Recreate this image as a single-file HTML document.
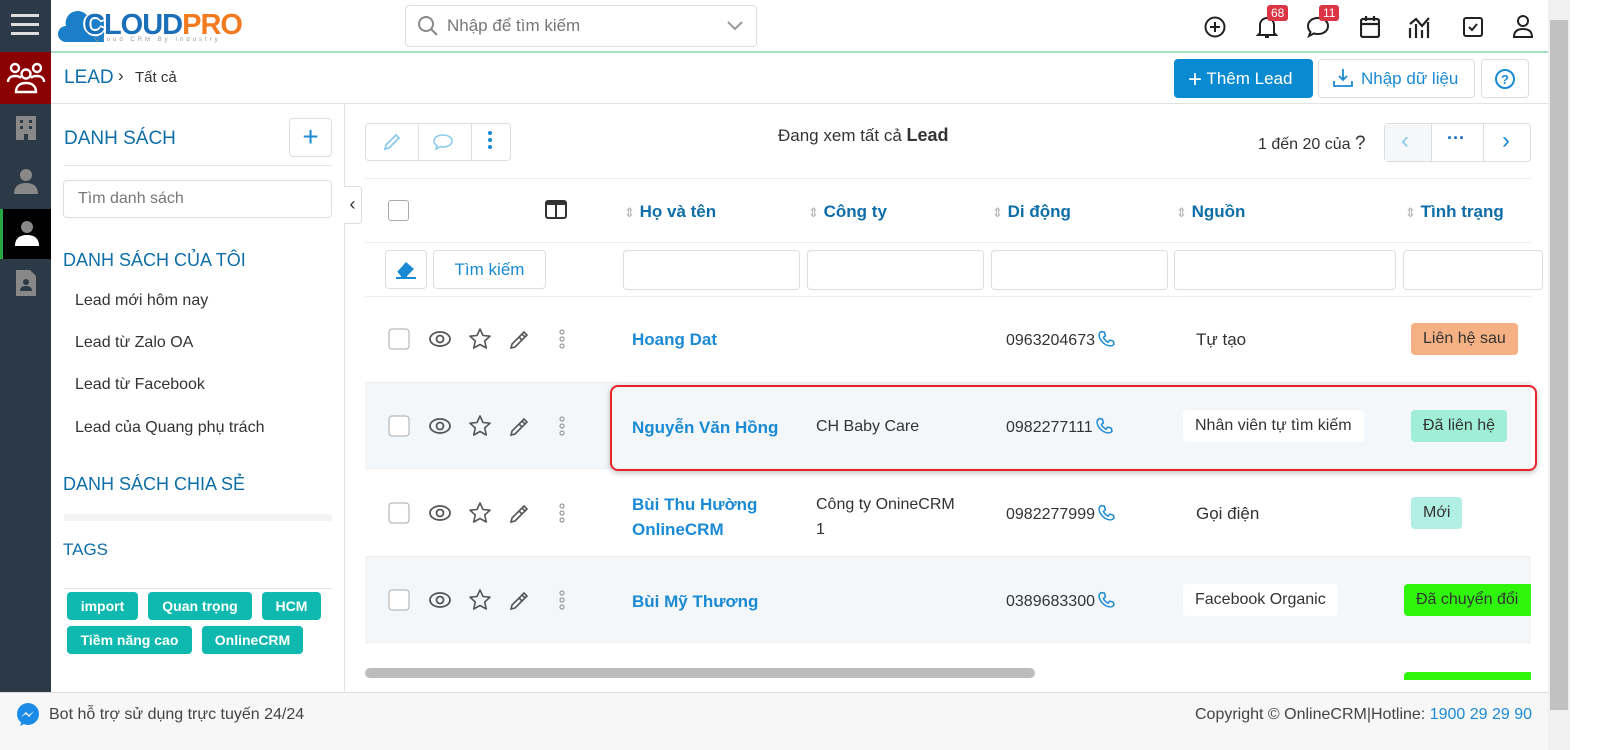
<!DOCTYPE html>
<html><head><meta charset="utf-8">
<style>
*{box-sizing:border-box;margin:0;padding:0}
body{width:1600px;height:750px;overflow:hidden;background:#fff;font-family:"Liberation Sans","DejaVu Sans",sans-serif;font-size:16px;color:#333;position:relative}
.a{position:absolute}
.side{left:0;top:0;width:51px;height:692px;background:#2c3a47}
.blue{color:#0e6ea8}
.lnk{color:#1a8ad4}
.chk{width:21px;height:21px;border:1px solid #aaa;border-radius:3px;background:#fff}
.btn{border:1px solid #ddd;border-radius:4px;background:#fff}
.tag{background:#10b9b0;color:#fff;font-weight:bold;font-size:14px;border-radius:4px;height:28px;line-height:28px;text-align:center}
.inp{border:1px solid #ddd;border-radius:4px;background:#fff;height:40px}
.badge{background:#dc3545;color:#fff;font-size:12px;border-radius:3px;padding:0 4px;height:16px;line-height:16px}
.pill{border-radius:4px;height:32px;line-height:32px;padding:0 12px;font-size:16px}
svg{display:block}
.ph{display:inline-block;vertical-align:-2px;margin-left:3px}
</style></head><body>
<div class="a side"></div>
<div class="a" style="left:11px;top:14px;width:28px;height:3px;background:#ddd;box-shadow:0 9px 0 #ddd,0 18px 0 #ddd"></div>
<div class="a" style="left:0;top:52px;width:51px;height:52px;background:#8b0000"></div>
<svg class="a" style="left:6px;top:60px" width="40" height="34" viewBox="0 0 40 34" fill="none" stroke="#fff" stroke-width="2.4"><circle cx="9" cy="8" r="4"/><circle cx="31" cy="8" r="4"/><circle cx="20" cy="14" r="4.5"/><path d="M2 22c0-4 3-6 7-6s5 1 6 2M38 22c0-4-3-6-7-6s-5 1-6 2M10 32c0-6 4-9 10-9s10 3 10 9z"/></svg>
<svg class="a" style="left:16px;top:116px" width="20" height="24" viewBox="0 0 20 24"><rect x="0" y="0" width="20" height="24" fill="#888"/><g fill="#2c3a47"><rect x="4" y="4" width="3" height="3"/><rect x="13" y="4" width="3" height="3"/><rect x="4" y="10" width="3" height="3"/><rect x="13" y="10" width="3" height="3"/><rect x="8" y="18" width="4" height="6"/></g></svg>
<svg class="a" style="left:14px;top:168px" width="24" height="26" viewBox="0 0 24 26" fill="#888"><circle cx="12" cy="7" r="6"/><path d="M0 26c0-8 5-11 12-11s12 3 12 11z"/></svg>
<div class="a" style="left:0;top:209px;width:51px;height:50px;background:#000"></div>
<div class="a" style="left:0;top:209px;width:3px;height:50px;background:#28a745"></div>
<svg class="a" style="left:15px;top:220px" width="24" height="26" viewBox="0 0 24 26"><circle cx="12" cy="7" r="6" fill="#888"/><path d="M0 26c0-8 5-11 12-11s12 3 12 11z" fill="#fff"/></svg>
<svg class="a" style="left:16px;top:270px" width="20" height="26" viewBox="0 0 20 26"><path d="M0 0h14l6 6v20H0z" fill="#888"/><circle cx="10" cy="12" r="3" fill="#2c3a47"/><path d="M4 21c0-4 3-5 6-5s6 1 6 5z" fill="#2c3a47"/></svg>

<div class="a" style="left:51px;top:51px;width:1497px;height:2px;background:#a8e0c4"></div>
<svg class="a" style="left:57px;top:4px" width="48" height="40" viewBox="0 0 48 40"><path d="M9 38a8 8 0 010-16 12 12 0 0122-9 10 10 0 0116 11v14z" fill="#1a7fc8"/></svg>
<div class="a" style="left:84px;top:9px;font-size:29px;font-weight:bold;letter-spacing:-1px;text-shadow:-2px 0 0 #fff,0 -2px 0 #fff,2px 0 0 #fff,0 2px 0 #fff"><span style="color:#1a6fb8">CLOUD</span><span style="color:#f47a20">PRO</span></div>
<div class="a" style="left:95px;top:37px;font-size:6px;letter-spacing:3px;color:#999">Cloud CRM By Industry</div>
<div class="a inp" style="left:405px;top:5px;width:352px;height:42px"></div>
<svg class="a" style="left:417px;top:15px" width="22" height="22" viewBox="0 0 22 22" fill="none" stroke="#888" stroke-width="2"><circle cx="9" cy="9" r="7"/><path d="M14 14l6 6"/></svg>
<div class="a" style="left:447px;top:16px;color:#777;font-size:17px">Nhập để tìm kiếm</div>
<svg class="a" style="left:726px;top:20px" width="18" height="12" viewBox="0 0 18 12" fill="none" stroke="#999" stroke-width="2"><path d="M2 2l7 7 7-7"/></svg>
<svg class="a" style="left:1204px;top:16px" width="22" height="22" viewBox="0 0 22 22" fill="none" stroke="#222" stroke-width="2"><circle cx="11" cy="11" r="9.5"/><path d="M11 6v10M6 11h10"/></svg>
<svg class="a" style="left:1256px;top:15px" width="22" height="24" viewBox="0 0 22 24" fill="none" stroke="#222" stroke-width="2"><path d="M4 18V10a7 7 0 0114 0v8l2 2H2zM9 22h4"/></svg>
<div class="a badge" style="left:1267px;top:5px">68</div>
<svg class="a" style="left:1306px;top:16px" width="24" height="22" viewBox="0 0 24 22" fill="none" stroke="#222" stroke-width="2"><path d="M12 2c6 0 10 3.5 10 8s-4 8-10 8c-1.5 0-3-.2-4-.6L3 20l1.5-4C3 14.5 2 12.5 2 10c0-4.5 4-8 10-8z"/></svg>
<div class="a badge" style="left:1319px;top:5px">11</div>
<svg class="a" style="left:1360px;top:15px" width="20" height="23" viewBox="0 0 20 23" fill="none" stroke="#222" stroke-width="2.2"><rect x="1" y="4" width="18" height="18" rx="2"/><path d="M1 9h18M6 1v5M14 1v5" /></svg>
<svg class="a" style="left:1408px;top:16px" width="24" height="22" viewBox="0 0 24 22" fill="none" stroke="#222" stroke-width="2.2"><path d="M2 22V12M8 22V8M14 22v-8M20 22V6M2 8l6-5 6 7 7-8"/></svg>
<svg class="a" style="left:1463px;top:17px" width="20" height="20" viewBox="0 0 20 20" fill="none" stroke="#222" stroke-width="2"><rect x="1" y="1" width="18" height="18" rx="2"/><path d="M6 10l3 3 5-6"/></svg>
<svg class="a" style="left:1513px;top:15px" width="20" height="23" viewBox="0 0 20 23" fill="none" stroke="#222" stroke-width="2"><circle cx="10" cy="6" r="5"/><path d="M1 22c0-6 4-8 9-8s9 2 9 8z"/></svg>
<div class="a" style="left:1548px;top:0;width:22px;height:750px;background:#f0f0f0"></div>
<div class="a" style="left:1550px;top:20px;width:18px;height:690px;background:#c1c1c1"></div>
<div class="a" style="left:1570px;top:0;width:30px;height:750px;background:#fff"></div>

<div class="a blue" style="left:64px;top:67px;font-size:19px">LEAD</div>
<div class="a" style="left:118px;top:66px;font-size:17px">›</div>
<div class="a" style="left:135px;top:69px;font-size:15px">Tất cả</div>
<div class="a" style="left:1174px;top:59px;width:139px;height:39px;background:#0a8bd1;border-radius:4px;color:#fff;font-size:17px;line-height:39px;padding-left:14px"><span style="font-size:24px;vertical-align:-3px">+</span> Thêm Lead</div>
<div class="a btn" style="left:1318px;top:59px;width:157px;height:39px;color:#1a8ad4;font-size:17px;line-height:37px;padding-left:42px">Nhập dữ liệu</div>
<svg class="a" style="left:1333px;top:68px" width="20" height="20" viewBox="0 0 20 20" fill="none" stroke="#1a8ad4" stroke-width="1.8"><path d="M10 1v11M6 8l4 4 4-4M1 13v5h18v-5"/></svg>
<div class="a btn" style="left:1481px;top:59px;width:48px;height:39px"></div>
<svg class="a" style="left:1494px;top:68px" width="22" height="22" viewBox="0 0 22 22" fill="none" stroke="#1a8ad4" stroke-width="2"><circle cx="11" cy="11" r="9"/><text x="11" y="16" font-size="13" text-anchor="middle" fill="#1a8ad4" stroke="none" font-weight="bold" font-family="Liberation Sans">?</text></svg>
<div class="a" style="left:51px;top:103px;width:1497px;height:1px;background:#e3e3e3"></div>

<div class="a" style="left:344px;top:104px;width:1px;height:588px;background:#e3e3e3"></div>
<div class="a blue" style="left:64px;top:128px;font-size:19px">DANH SÁCH</div>
<div class="a btn" style="left:289px;top:118px;width:43px;height:39px;color:#1a8ad4;font-size:28px;text-align:center;line-height:36px">+</div>
<div class="a" style="left:64px;top:165px;width:268px;height:1px;background:#e5e5e5"></div>
<div class="a inp" style="left:63px;top:180px;width:269px;height:38px;color:#777;font-size:16px;line-height:36px;padding-left:14px">Tìm danh sách</div>
<div class="a blue" style="left:63px;top:250px;font-size:18px">DANH SÁCH CỦA TÔI</div>
<div class="a" style="left:75px;top:292px;font-size:16px">Lead mới hôm nay</div>
<div class="a" style="left:75px;top:334px;font-size:16px">Lead từ Zalo OA</div>
<div class="a" style="left:75px;top:376px;font-size:16px">Lead từ Facebook</div>
<div class="a" style="left:75px;top:419px;font-size:16px">Lead của Quang phụ trách</div>
<div class="a blue" style="left:63px;top:474px;font-size:18px">DANH SÁCH CHIA SẺ</div>
<div class="a" style="left:64px;top:514px;width:268px;height:7px;background:#f3f3f3"></div>
<div class="a blue" style="left:63px;top:540px;font-size:17px">TAGS</div>
<div class="a" style="left:64px;top:588px;width:268px;height:1px;background:#e5e5e5"></div>
<div class="a tag" style="left:67px;top:592px;width:71px">import</div>
<div class="a tag" style="left:148px;top:592px;width:104px">Quan trọng</div>
<div class="a tag" style="left:262px;top:592px;width:59px">HCM</div>
<div class="a tag" style="left:67px;top:626px;width:125px">Tiềm năng cao</div>
<div class="a tag" style="left:202px;top:626px;width:101px">OnlineCRM</div>

<div class="a btn" style="left:344px;top:186px;width:18px;height:38px;border-left:none;border-radius:0 4px 4px 0;font-size:18px;line-height:34px;text-align:center">‹</div>

<div class="a btn" style="left:365px;top:123px;width:146px;height:38px"></div>
<div class="a" style="left:418px;top:124px;width:1px;height:36px;background:#e3e3e3"></div>
<div class="a" style="left:471px;top:124px;width:1px;height:36px;background:#ddd"></div>
<svg class="a" style="left:383px;top:133px" width="18" height="18" viewBox="0 0 18 18" fill="none" stroke="#8ccbec" stroke-width="1.8"><path d="M2 16l1-4L13 2l3 3L6 15z"/></svg>
<svg class="a" style="left:433px;top:134px" width="20" height="16" viewBox="0 0 20 16" fill="none" stroke="#8ccbec" stroke-width="1.6"><path d="M10 1c5 0 9 2.5 9 6s-4 6-9 6c-1 0-2 0-3-.3L3 15l1-3.5C2 10.5 1 9 1 7c0-3.5 4-6 9-6z"/></svg>
<div class="a" style="left:488px;top:131px;width:4px;height:4px;border-radius:2px;background:#1a8ad4;box-shadow:0 7px 0 #1a8ad4,0 14px 0 #1a8ad4"></div>
<div class="a" style="left:778px;top:125px;font-size:17px">Đang xem tất cả <b style="font-size:18px">Lead</b></div>
<div class="a" style="left:1258px;top:133px;font-size:16px">1 đến 20 của <span style="font-size:19px">?</span></div>
<div class="a btn" style="left:1384px;top:123px;width:147px;height:39px"></div>
<div class="a" style="left:1385px;top:124px;width:46px;height:37px;background:#f5f7f8"></div>
<div class="a" style="left:1431px;top:124px;width:1px;height:37px;background:#ddd"></div>
<div class="a" style="left:1483px;top:124px;width:1px;height:37px;background:#ddd"></div>
<div class="a" style="left:1401px;top:127px;color:#8ccbec;font-size:24px">‹</div>
<div class="a" style="left:1447px;top:128px;color:#1a6fb8;font-size:18px;font-weight:bold">···</div>
<div class="a" style="left:1502px;top:127px;color:#1a8ad4;font-size:24px">›</div>
<div class="a" style="left:365px;top:178px;width:1166px;height:1px;background:#eee"></div>

<div class="a chk" style="left:388px;top:200px"></div>
<svg class="a" style="left:545px;top:200px" width="22" height="19" viewBox="0 0 22 19"><rect x="1" y="1" width="20" height="17" rx="2" fill="none" stroke="#333" stroke-width="2"/><rect x="1" y="1" width="20" height="4" fill="#333"/><path d="M11 4v14" stroke="#333" stroke-width="2"/></svg>
<div class="a blue" style="left:624px;top:202px;font-size:17px;font-weight:bold"><span style="color:#bbb;font-size:13px">⇕</span> Họ và tên</div>
<div class="a blue" style="left:808px;top:202px;font-size:17px;font-weight:bold"><span style="color:#bbb;font-size:13px">⇕</span> Công ty</div>
<div class="a blue" style="left:992px;top:202px;font-size:17px;font-weight:bold"><span style="color:#bbb;font-size:13px">⇕</span> Di động</div>
<div class="a blue" style="left:1176px;top:202px;font-size:17px;font-weight:bold"><span style="color:#bbb;font-size:13px">⇕</span> Nguồn</div>
<div class="a blue" style="left:1405px;top:202px;font-size:17px;font-weight:bold"><span style="color:#bbb;font-size:13px">⇕</span> Tình trạng</div>
<div class="a" style="left:365px;top:242px;width:1166px;height:1px;background:#eee"></div>
<div class="a btn" style="left:385px;top:250px;width:42px;height:39px"></div>
<svg class="a" style="left:394px;top:259px" width="24" height="20" viewBox="0 0 24 20"><path d="M4 12L12 3l8 7-7 7H8z" fill="#1a8ad4"/><path d="M4 12l4 5h5M2 19h20" fill="none" stroke="#1a8ad4" stroke-width="2"/></svg>
<div class="a btn" style="left:433px;top:250px;width:113px;height:39px;color:#1a8ad4;font-size:17px;text-align:center;line-height:37px">Tìm kiếm</div>
<div class="a inp" style="left:623px;top:250px;width:177px"></div>
<div class="a inp" style="left:807px;top:250px;width:177px"></div>
<div class="a inp" style="left:991px;top:250px;width:177px"></div>
<div class="a inp" style="left:1174px;top:250px;width:222px"></div>
<div class="a inp" style="left:1403px;top:250px;width:140px"></div>
<div class="a" style="left:365px;top:296px;width:1166px;height:1px;background:#eee"></div>

<div class="a" style="left:365px;top:382px;width:1166px;height:87px;background:#f4f7f9;border-top:1px solid #eee;border-bottom:1px solid #eee"></div>
<div class="a" style="left:365px;top:556px;width:1166px;height:87px;background:#f4f7f9;border-top:1px solid #eee;border-bottom:1px solid #eee"></div>

<svg class="a" style="left:388px;top:328px" width="190" height="300" viewBox="0 0 190 300">
<g id="ic">
<rect x="1" y="1" width="20" height="20" rx="3" fill="#fff" stroke="#aaa"/>
<ellipse cx="52" cy="11" rx="10" ry="7" fill="none" stroke="#555" stroke-width="1.8"/><circle cx="52" cy="11" r="3.5" fill="none" stroke="#555" stroke-width="1.8"/>
<path d="M92 1l3 6.5 7 .7-5.3 4.8 1.6 7L92 16.5 85.7 20l1.6-7L82 8.2l7-.7z" fill="none" stroke="#555" stroke-width="1.6" stroke-linejoin="round"/>
<path d="M123 20l1-4 10-10 3 3-10 10zM131 9l3 3M134 6l2-2 3 3-2 2" fill="none" stroke="#555" stroke-width="1.6"/>
<circle cx="174" cy="4" r="2" fill="none" stroke="#999" stroke-width="1.2"/><circle cx="174" cy="11" r="2" fill="none" stroke="#999" stroke-width="1.2"/><circle cx="174" cy="18" r="2" fill="none" stroke="#999" stroke-width="1.2"/>
</g>
<use href="#ic" y="87"/><use href="#ic" y="174"/><use href="#ic" y="261"/>
</svg>

<svg width="0" height="0" style="position:absolute"><symbol id="ph" viewBox="0 0 16 16"><path d="M3 1.5l3 .5 1 3.5-2 1.5c1 2 2.5 3.5 4.5 4.5l1.5-2 3.5 1 .5 3c-1 1-2 1.5-3 1.5C6.5 15 1 9.5 1 4.5c0-1 .5-2 2-3z" fill="none" stroke="#1a8ad4" stroke-width="1.4" stroke-linejoin="round"/></symbol></svg>

<div class="a lnk" style="left:632px;top:330px;font-size:17px;font-weight:bold">Hoang Dat</div>
<div class="a" style="left:1006px;top:330px;font-size:16px">0963204673<svg class="ph" width="17" height="17"><use href="#ph"/></svg></div>
<div class="a" style="left:1196px;top:330px;font-size:17px">Tự tạo</div>
<div class="a pill" style="left:1411px;top:323px;background:#f5b183">Liên hệ sau</div>

<div class="a lnk" style="left:632px;top:418px;font-size:17px;font-weight:bold">Nguyễn Văn Hồng</div>
<div class="a" style="left:816px;top:418px;font-size:16px">CH Baby Care</div>
<div class="a" style="left:1006px;top:417px;font-size:16px">0982277111<svg class="ph" width="17" height="17"><use href="#ph"/></svg></div>
<div class="a pill" style="left:1183px;top:410px;background:#fff">Nhân viên tự tìm kiếm</div>
<div class="a pill" style="left:1411px;top:410px;background:#a0eed6">Đã liên hệ</div>
<div class="a" style="left:610px;top:385px;width:927px;height:86px;border:2px solid #e8242b;border-radius:8px;box-shadow:0 2px 6px rgba(0,0,0,.25)"></div>

<div class="a lnk" style="left:632px;top:492px;font-size:17px;font-weight:bold;line-height:25px">Bùi Thu Hường<br>OnlineCRM</div>
<div class="a" style="left:816px;top:492px;font-size:16px;line-height:25px">Công ty OnineCRM<br>1</div>
<div class="a" style="left:1006px;top:504px;font-size:16px">0982277999<svg class="ph" width="17" height="17"><use href="#ph"/></svg></div>
<div class="a" style="left:1196px;top:504px;font-size:17px">Gọi điện</div>
<div class="a pill" style="left:1411px;top:497px;background:#b1eee4">Mới</div>

<div class="a lnk" style="left:632px;top:592px;font-size:17px;font-weight:bold">Bùi Mỹ Thương</div>
<div class="a" style="left:1006px;top:591px;font-size:16px">0389683300<svg class="ph" width="17" height="17"><use href="#ph"/></svg></div>
<div class="a pill" style="left:1183px;top:584px;background:#fff">Facebook Organic</div>
<div class="a pill" style="left:1404px;top:584px;width:127px;background:#2ef50a;border-radius:4px 0 0 4px">Đã chuyển đổi</div>
<div class="a" style="left:1404px;top:672px;width:127px;height:8px;background:#2ef50a;border-radius:4px 0 0 0"></div>
<div class="a" style="left:365px;top:668px;width:670px;height:10px;background:#bcbcbc;border-radius:5px"></div>

<div class="a" style="left:0;top:692px;width:1548px;height:58px;background:#f7f7f7;border-top:1px solid #ddd"></div>
<svg class="a" style="left:15px;top:702px" width="26" height="26" viewBox="0 0 26 26"><circle cx="13" cy="12" r="11" fill="#1a8ce8"/><path d="M5 24l2-5 4 2z" fill="#1a8ce8"/><path d="M6 15l5-5 3 3 5-4-5 6-3-3z" fill="#fff"/></svg>
<div class="a" style="left:49px;top:706px;font-size:16px;color:#444">Bot hỗ trợ sử dụng trực tuyến 24/24</div>
<div class="a" style="left:1195px;top:706px;font-size:16px;color:#444">Copyright © OnlineCRM|Hotline: <span class="lnk">1900 29 29 90</span></div>
</body></html>
